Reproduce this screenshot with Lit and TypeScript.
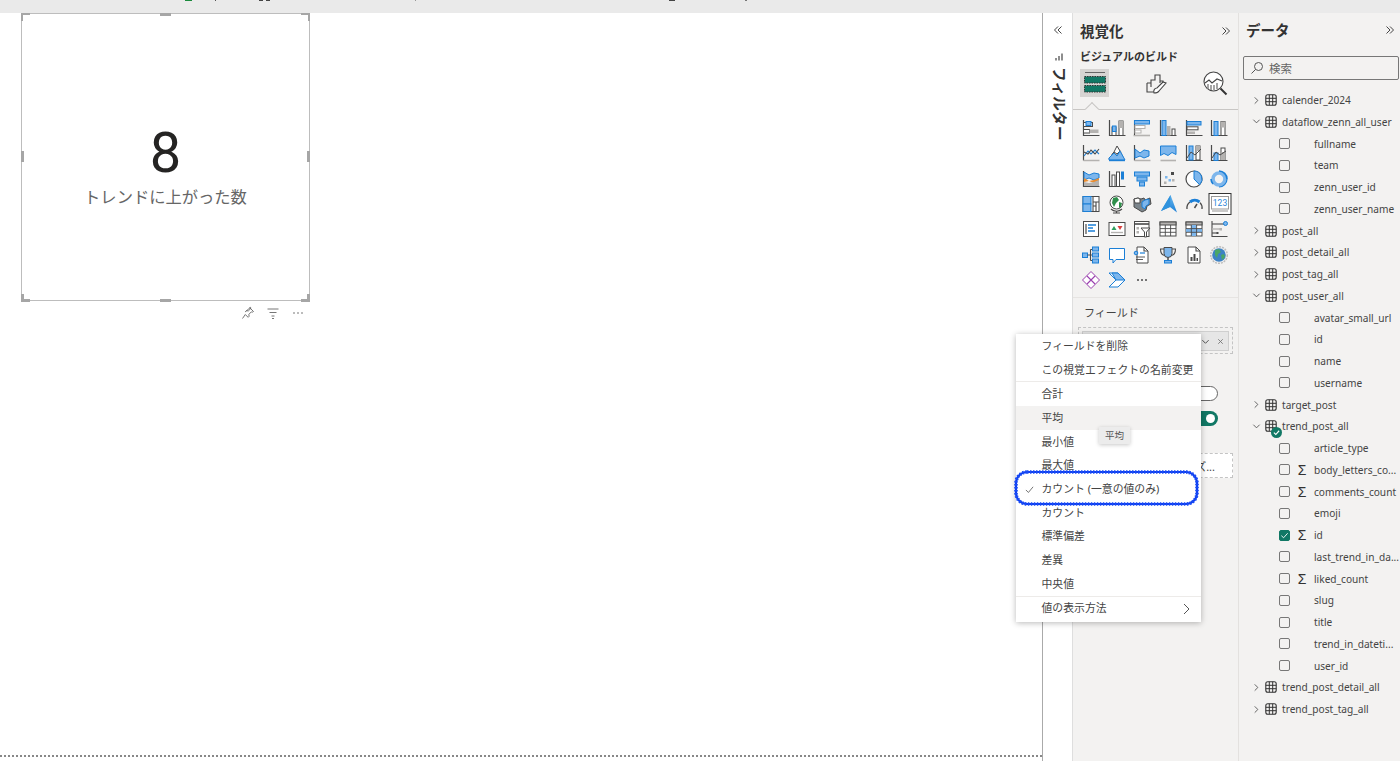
import { LitElement, html, css, svg } from "lit";
import { customElement } from "lit/decorators.js";

const D = "#4a4a4a";
const B = "#1b7fd6";
const L = "#7db6ec";
const G = "#b4b2b0";

const axes = svg`<path d="M2.5 2v15.5H18.5" fill="none" stroke="${D}" stroke-width="1.2"/>`;
const rect = (x: number, y: number, w: number, h: number, fill: string, stroke = "none") =>
  svg`<rect x="${x}" y="${y}" width="${w}" height="${h}" fill="${fill}" stroke="${stroke}"/>`;
const line = (d: string, stroke = D, w = 1.1) => svg`<path d="${d}" fill="none" stroke="${stroke}" stroke-width="${w}"/>`;
const area = (d: string, fill: string, stroke = "none") => svg`<path d="${d}" fill="${fill}" stroke="${stroke}" stroke-width="1"/>`;

const icons = [
  svg`${axes}${rect(2.5, 4.5, 9, 4, "#fff", D)}${rect(5, 3.5, 5, 4, L, B)}${rect(2.5, 11.5, 6, 3.5, "#fff", D)}${rect(8.5, 11.5, 9, 3.5, G)}`,
  svg`${axes}${rect(5, 9, 4, 8.5, "#fff", D)}${rect(5.5, 8, 3.5, 5.5, L, B)}${rect(12, 3, 4, 14.5, "#fff", D)}${rect(12, 3, 4, 7, G)}`,
  svg`${line("M1.5 17.5H18", G, 1.6)}${line("M2.5 2v15")}${rect(2.5, 2.5, 15, 3.5, L, B)}${rect(3, 7.5, 10, 3, "#fff", G)}${rect(3, 12, 6, 3, "#fff", G)}`,
  svg`${axes}${rect(4, 2.5, 4, 15, L, B)}${rect(9, 8, 3.5, 9.5, G)}${rect(14, 11, 3, 6.5, "#fff", D)}`,
  svg`${axes}${rect(3, 3.5, 14, 3.5, L, B)}${rect(3, 8.8, 11, 3, "#fff", D)}${rect(3, 13.5, 8, 2.5, G)}`,
  svg`${axes}${rect(5, 3.5, 4, 14, L, B)}${rect(12, 3.5, 4, 14, "#fff", D)}${rect(12, 3.5, 4, 6, G)}`,

  svg`${line("M2.5 2v15.5", D, 1.2)}${line("M2.5 17.5H18.5", G, 1.5)}${line("M3 13l4-5 3 3 4-4 4 4", B)}${line("M3 9l4 2 3-4 4 4 4-5", D)}`,
  svg`${area("M10 3l4 5 4 9H8z", G)}${area("M2 16l5-7 3-6 3 5-3 3-3-2z", "#fff", D)}${area("M2 17v-2l5-5 3 3 3-5 5 9z", L, B)}${line("M2 17.5H18", B, 1.4)}`,
  svg`${line("M2.5 2v15.5", D, 1.2)}${line("M2.5 17.5H18.5", G, 1.5)}${area("M3 6l5 4 4-3 5 1v5l-5 2-4-2-5 2z", L, B)}`,
  svg`${line("M2.5 17.5H18", G, 1.6)}${area("M2.5 3H18v8.5l-4-2-4 3-4-2-3.5 2z", L, B)}`,
  svg`${axes}${rect(5, 3, 4, 14, L, B)}${rect(12, 3, 4, 14, "#fff", D)}${rect(12, 3, 4, 5, G)}${line("M3 15l4-6 4 3 6-6", D, 1)}`,
  svg`${axes}${rect(5, 10, 4, 7.5, L, B)}${rect(12, 5, 4, 12, "#fff", D)}${rect(12, 9, 4, 8, G)}${line("M3 15l4-6 4 3 6-4", D, 1)}`,

  svg`${axes}${area("M3 3l5 3 5-2 5 1v4l-5 2-5-2-5 2z", L, B)}${area("M3 9l5 3 5-1 5-2v3l-5 2-5-2-5 1z", "#e98b2e")}${area("M3 13l5 1 5-1 5-2v6H3z", G)}`,
  svg`${axes}${rect(5, 6, 3, 11.5, "#fff", D)}${rect(9.5, 3, 3, 14.5, "#fff", D)}${rect(14, 2.5, 3, 8, B)}`,
  svg`${rect(2.5, 3, 15, 4, L, B)}${rect(5, 8, 10, 4, L, B)}${rect(7.5, 13, 5, 4, L, B)}`,
  svg`${line("M2.5 2v15.5H18.5")}${rect(13, 3, 3, 3, D)}${rect(7, 7, 2.5, 2.5, L)}${rect(10.5, 10, 2.5, 2.5, L)}${rect(14, 10, 2.5, 2.5, G)}${rect(6, 12.5, 2.5, 2.5, G)}`,
  svg`<circle cx="10" cy="10" r="8" fill="#fff" stroke="${D}" stroke-width="1.2"/>${area("M10 2a8 8 0 0 1 5.6 13.7L10 10z", L, B)}`,
  svg`<circle cx="10" cy="10" r="6" fill="none" stroke="${L}" stroke-width="3.6"/>${line("M10 2a8 8 0 0 1 8 8", B, 1.6)}${line("M4 15a8 8 0 0 1-2-5", B, 1.6)}${line("M10 18a8 8 0 0 0 8-8", B, 1.2)}`,

  svg`${rect(2, 2.5, 16, 15, "#fff", D)}${rect(2, 2.5, 8, 7.5, L, B)}${rect(2, 10, 8, 7.5, L, B)}${line("M12 2.5v15M12 8h6M15 8v9.5M12 12h3", D)}`,
  svg`<circle cx="9.5" cy="8.5" r="6.5" fill="#fff" stroke="${D}"/>${area("M6 4l4-1 2 3-3 3-2 4-2-4z", "#2f8f4b")}${area("M12 8l3 1-1 4-2 1z", "#2f8f4b")}${line("M4 15c3 3 8 3 11 0M9.5 17v1.500M6 19h7", D, 1.2)}`,
  svg`${area("M2 5l4-1 3 1 3-1 1 2 5-2 1 6-4 2-1 4-4 2-3-2-5-3z", "#7b858c", D)}${area("M10 8l3-2 4-1 0 5-3 2-1 3-3-2z", L, B)}${area("M2 5l4-1 2 1v4H3z", "#fff", D)}`,
  svg`<defs><linearGradient id="az" x1="0" y1="0" x2="0" y2="1"><stop offset="0" stop-color="#6cb9ee"/><stop offset="1" stop-color="#1b7fd6"/></linearGradient></defs>${area("M12.5 1L19 18.500 12 13 3 17z", "url(#az)")}${area("M12.5 1L12 13 3 17z", "#2f92dd")}`,
  svg`${line("M3 15a7.500 7.500 0 0 1 3-7", D, 1.3)}${line("M6 8a7.500 7.500 0 0 1 9.500 0", B, 3)}${line("M16 8.600a7.500 7.500 0 0 1 2 6.400", D, 1.3)}${line("M10.500 14l2.500-4", D, 1.5)}`,
  svg`${rect(0, -0.5, 22, 21, "#fff", "#333")}${rect(2.5, 2.5, 17, 12.5, "#fff", "#999")}${line("M3 17H19", G, 1.4)}<text x="11" y="12" text-anchor="middle" font-size="8.500" fill="#2b86d8" font-family="Roboto, sans-serif">123</text>`,

  svg`${rect(2.5, 2.5, 15, 15, "#fff", D)}${line("M5 5v10", D, 1.2)}${line("M7 6h8M7 9h5M7 12h7", B, 1.4)}`,
  svg`${rect(2, 3.5, 16, 13, "#fff", D)}${area("M4.500 11l2.500-4 2.500 4z", "#2f9e5d")}${area("M10.500 7h5L13 11z", "#d8403f")}${line("M4 13.500h12", G, 1.4)}`,
  svg`${rect(2.5, 2.5, 14.5, 15, "#fff", D)}${line("M2.500 5h14.500", D, 1.6)}${rect(4.5, 8, 2.5, 2.5, G)}${rect(4.5, 12, 2.5, 2.5, G)}${area("M9 9h9l-3.500 4v5h-2v-5z", "#fff", D)}`,
  svg`${rect(2, 3, 16, 14, "#fff", D)}${rect(2, 3, 16, 3, G, D)}${line("M7.300 6v11M12.600 6v11M2 9.600h16M2 13.300h16", D, 0.9)}`,
  svg`${rect(2, 3, 16, 14, "#fff", D)}${rect(2, 3, 16, 3, G, D)}${rect(7, 6, 5, 11, L)}${rect(2, 10, 16, 3, L)}${line("M7.300 6v11M12.600 6v11M2 9.600h16M2 13.300h16", D, 0.9)}`,
  svg`${line("M3 2v15.500H18.500", D)}${line("M3 5h12", D)}${line("M3 10h8", G, 1.4)}${line("M3 14h5", D)}<circle cx="16.500" cy="4.500" r="2" fill="${L}" stroke="${B}"/>${rect(10.5, 9, 2.5, 2.5, G)}${rect(7.5, 13, 2, 2, D)}`,

  svg`${rect(1.5, 8, 5, 4.5, L, B)}${line("M6.500 10h3M9.500 4.500v11M9.500 4.500h2M9.500 10h2M9.500 15.500h2", D)}${rect(11.5, 2, 6, 4, L, B)}${rect(11.5, 8, 6, 4, L, B)}${rect(11.5, 14, 6, 4, L, B)}`,
  svg`${area("M2.500 3.500h15v11H9l-3 3.500v-3.500H2.500z", "#fff", B)}`,
  svg`${area("M5 2h7l4 4v12H5z", "#fff", D)}${line("M12 2v4h4", D)}<circle cx="4" cy="8" r="1.800" fill="${L}" stroke="${B}"/>${line("M8 8h5", B, 1.2)}${line("M4 12h9M4 14.500h7", D, 0.9)}`,
  svg`${area("M6 2.500h8v6a4 4 0 0 1-8 0z", L, D)}${line("M6 4H2.500c0 4 1.500 6 4 6.500M14 4h3.500c0 4-1.500 6-4 6.500", D)}${line("M10 12.500v3", D, 1.5)}${rect(6.5, 15.5, 7, 2.5, L, B)}`,
  svg`${area("M4 2h8l4 4v12H4z", "#fff", D)}${line("M12 2v4h4", D)}${rect(6.5, 12, 2, 4, D)}${rect(9.5, 9, 2, 7, D)}${rect(12.5, 13, 1.5, 3, D)}`,
  svg`<circle cx="10" cy="10" r="8.300" fill="none" stroke="#bdbdbd" stroke-width="1.500" stroke-dasharray="2 1"/><circle cx="10" cy="10" r="6.800" fill="#3d82c4"/>${area("M6 5l4-1 2 3-3 2-1 4-2-3z", "#4aa765")}${area("M12 10l3-1 1 3-3 3z", "#4aa765")}`,

  svg`${area("M10 1.500L18.500 10 10 18.500 1.500 10z", "#fff", "#9a3fae")}${line("M6 6l8 8M14 6l-8 8", "#9a3fae")}`,
  svg`${area("M2 3h9l7 7-7 7H2l7-7z", "#fff", B)}${area("M11 3l7 7H9L5 3z", L, B)}`,
  svg`<g fill="${D}"><circle cx="6" cy="10" r="1"/><circle cx="10" cy="10" r="1"/><circle cx="14" cy="10" r="1"/></g>`,
];

type Field = { n: string; s?: boolean; c?: boolean };
type Table = { n: string; open?: boolean; badge?: boolean; fields?: Field[] };

const tables: Table[] = [
  { n: "calender_2024" },
  { n: "dataflow_zenn_all_user", open: true, fields: [{ n: "fullname" }, { n: "team" }, { n: "zenn_user_id" }, { n: "zenn_user_name" }] },
  { n: "post_all" },
  { n: "post_detail_all" },
  { n: "post_tag_all" },
  { n: "post_user_all", open: true, fields: [{ n: "avatar_small_url" }, { n: "id" }, { n: "name" }, { n: "username" }] },
  { n: "target_post" },
  {
    n: "trend_post_all", open: true, badge: true,
    fields: [
      { n: "article_type" }, { n: "body_letters_co...", s: true }, { n: "comments_count", s: true }, { n: "emoji" },
      { n: "id", s: true, c: true }, { n: "last_trend_in_da..." }, { n: "liked_count", s: true }, { n: "slug" },
      { n: "title" }, { n: "trend_in_dateti..." }, { n: "user_id" },
    ],
  },
  { n: "trend_post_detail_all" },
  { n: "trend_post_tag_all" },
];

const menuTop = ["フィールドを削除", "この視覚エフェクトの名前変更"];
const menuMid = ["合計", "平均", "最小値", "最大値", "カウント (一意の値のみ)", "カウント", "標準偏差", "差異", "中央値"];
const topMarks = [
  { x: 185, w: 7, c: "#1a8a3c" }, { x: 215, w: 1, c: "#555" }, { x: 259, w: 4, c: "#444" }, { x: 266, w: 4, c: "#444" },
  { x: 415, w: 1, c: "#999" }, { x: 669, w: 6, c: "#444" }, { x: 745, w: 2, c: "#777" },
];

const dbl = html`<svg class="dbl" viewBox="0 0 10 10"><path d="M1.500 1.500L5 5 1.500 8.500M5 1.500L8.500 5 5 8.500" fill="none" stroke="#444" stroke-width="1"/></svg>`;

@customElement("app-root")
export class AppRoot extends LitElement {
  static styles = css`
    :host { display: block; width: 1400px; height: 761px; overflow: hidden; position: relative; background: #fff;
      font-family: "Noto Sans", "Noto Sans CJK JP", sans-serif; color: #444; font-size: 11px; }
    * { box-sizing: border-box; }
    .top { height: 13px; background: #eaeaea; position: relative; }
    .mark { position: absolute; top: 0; height: 1px; }
    .main { display: flex; height: 748px; }
    .canvas { width: 1042px; flex: none; padding-left: 21px; height: 744px; border-bottom: 2px dotted #888; }
    .card { width: 289px; height: 288px; border: 1px solid #bdbdbd; position: relative; display: flex; flex-direction: column;
      align-items: center; padding-top: 112px; background: #fff; }
    .big { font: 400 56px/54px Roboto, sans-serif; color: #252423; }
    .lbl { font-size: 16.3px; line-height: 22px; margin-top: 6px; color: #666; white-space: nowrap; }
    .h { position: absolute; background: #a6a6a6; }
    .h.tm { left: 138px; top: -1px; width: 11px; height: 3px; }
    .h.bm { left: 138px; bottom: -2px; width: 11px; height: 3px; }
    .h.lm { left: -1px; top: 137px; width: 3px; height: 11px; }
    .h.rm { right: -1px; top: 137px; width: 3px; height: 11px; }
    .corner { position: absolute; width: 9px; height: 8px; border: 0 solid #a6a6a6; }
    .corner.tl { left: -1px; top: -1px; border-width: 2px 0 0 2px; }
    .corner.tr { right: -1px; top: -1px; border-width: 2px 2px 0 0; }
    .corner.bl { left: -1px; bottom: -2px; border-width: 0 0 3px 3px; }
    .corner.br { right: -1px; bottom: -2px; border-width: 0 3px 3px 0; }
    .vhead { width: 289px; display: flex; justify-content: flex-end; gap: 11px; padding: 5px 5px 0 0; }
    .vhead svg { width: 14px; height: 14px; }

    .filter { width: 31px; flex: none; border-left: 1px solid #aaa; border-right: 1px solid #dedede; display: flex;
      flex-direction: column; align-items: center; padding-top: 12px; background: #fff; margin-bottom: -4px; }
    .dbl { width: 10px; height: 10px; display: block; }
    .filter .bars { width: 10px; height: 10px; margin: 17px 0 0 3px; display: block; }
    .filter .vt { writing-mode: vertical-rl; text-orientation: sideways; font-size: 14.500px; font-weight: 700; color: #333; margin: 5px 0 0 4px;
      line-height: 16px; letter-spacing: 0.3px; }

    .viz { width: 166px; flex: none; background: #f3f2f1; padding-top: 8px; margin-bottom: -4px; border-right: 1px solid #e3e1df; }
    .phead { display: flex; align-items: center; justify-content: space-between; height: 20px; }
    .ptitle { font-size: 14.500px; font-weight: 700; color: #333; line-height: 20px; }
    .viz .phead { padding: 0 7px 0 7px; }
    .sub { font-weight: 700; font-size: 11px; line-height: 16px; margin: 8px 0 0 7px; color: #333; white-space: nowrap; }
    .build { display: flex; height: 28px; margin: 4px 0 0 7px; }
    .bt { width: 29px; height: 28px; display: flex; align-items: center; justify-content: center; }
    .bt.on { background: #d6d4d2; }
    .bt svg { width: 26px; height: 26px; }
    .bt.f { margin-left: 31px; }
    .bt.a { margin-left: 31px; }
    .sep { height: 1px; background: #c8c6c4; margin-top: 12px; position: relative; }
    .caret { position: absolute; left: 14px; top: -5px; width: 10px; height: 10px; background: #f3f2f1; border: 1px solid #c8c6c4;
      border-right: 0; border-bottom: 0; transform: rotate(45deg); }
    .gallery { display: grid; grid-template-columns: repeat(6, 25.7px); grid-auto-rows: 25.3px; padding-left: 5px; margin-top: 5.500px; }
    .cell { display: flex; align-items: center; justify-content: center; }
    .cell svg { width: 20px; height: 20px; display: block; overflow: visible; }
    .sep2 { height: 1px; background: #e6e4e2; margin-top: 4.500px; }
    .flabel { line-height: 16px; margin: 6.500px 0 0 11px; color: #444; white-space: nowrap; }
    .well { margin: 6.500px 5px 0 5px; height: 27px; border: 1px dashed #c4c4c4; padding: 3px; }
    .chip { height: 20px; background: #e6e6e6; border: 1px solid #cfcfcf; display: flex; align-items: center; justify-content: flex-end; gap: 6px; padding-right: 3px; }
    .chip svg { width: 9px; height: 9px; }
    .tog { width: 30px; height: 15px; border-radius: 8px; margin: 0 20px 0 auto; display: flex; align-items: center; padding: 0 3px; }
    .tog.off { margin-top: 32px; background: #fff; border: 1px solid #666; }
    .tog.on { margin-top: 10px; background: #117865; justify-content: flex-end; }
    .tog.on i { width: 9px; height: 9px; border-radius: 50%; background: #fff; }
    .well2 { margin: 27px 5px 0 5px; height: 25px; border: 1px dashed #c4c4c4; background: #fff; display: flex; align-items: center;
      justify-content: flex-end; padding-right: 17px; white-space: nowrap; }

    .data { flex: 1; background: #f3f2f1; padding-top: 7px; margin-bottom: -4px; min-width: 0; }
    .data .phead { padding: 0 5px 0 7px; }
    .search { margin: 16px 1px 0 4px; height: 24px; border: 1px solid #777; border-radius: 2px; display: flex; align-items: center; padding-left: 6px; gap: 5px; color: #666; font-size: 11.500px; }
    .search svg { width: 14px; height: 14px; }
    .tree { margin-top: 9.300px; }
    .row { height: 21.75px; display: flex; align-items: center; white-space: nowrap; font-size: 10.150px; color: #444; }
    .row.t { padding-left: 13px; }
    .row.t .chev { width: 9px; height: 9px; margin-right: 4px; flex: none; }
    .tbl { position: relative; width: 12px; height: 12px; margin-right: 5px; flex: none; }
    .tbl svg { width: 12px; height: 12px; display: block; }
    .badge { position: absolute; left: 6px; top: 7px; width: 11px; height: 11px; border-radius: 50%; background: #117865; display: flex; align-items: center; justify-content: center; }
    .badge svg { width: 7px; height: 7px; }
    .row.f { padding-left: 40px; }
    .cb { width: 11px; height: 11px; border: 1px solid #777; border-radius: 2px; flex: none; display: flex; align-items: center; justify-content: center; }
    .cb.on { background: #117865; border-color: #117865; }
    .cb svg { width: 9px; height: 9px; }
    .sig { width: 24px; flex: none; text-align: center; font: 14px/14px "Liberation Sans", sans-serif; color: #333; }

    .menu { position: absolute; left: 1016px; top: 334px; width: 185px; background: #fff; padding-bottom: 2px;
      box-shadow: 0 1px 6px rgba(0,0,0,.28); }
    .mi { height: 23.7px; display: flex; align-items: center; padding: 0 0 2px 25.500px; color: #444; white-space: nowrap; font-size: 10.850px; position: relative; }
    .mi.hv { background: #f3f2f1; }
    .mi .ck { position: absolute; left: 9px; top: 8px; width: 9px; height: 9px; }
    .mi .ar { position: absolute; right: 9px; top: 6px; width: 11px; height: 12px; }
    .msep { height: 1px; background: #edebe9; }
    .tip { position: absolute; left: 1099px; top: 427px; width: 31px; height: 17px; background: #ececec; font-size: 9.500px; text-align: center;
      line-height: 17px; color: #555; box-shadow: 0 1px 4px rgba(0,0,0,.22); }
    .hl { position: absolute; left: 1013px; top: 469px; width: 187px; height: 38px; }
  `;

  render() {
    return html`
      <div class="top">${topMarks.map((m) => html`<span class="mark" style="left:${m.x}px;width:${m.w}px;background:${m.c}"></span>`)}</div>
      <div class="main">
        <div class="canvas">
          <div class="card">
            <div class="corner tl"></div><div class="corner tr"></div><div class="corner bl"></div><div class="corner br"></div>
            <div class="h tm"></div><div class="h bm"></div><div class="h lm"></div><div class="h rm"></div>
            <div class="big">8</div>
            <div class="lbl">トレンドに上がった数</div>
          </div>
          <div class="vhead">
            <svg viewBox="0 0 14 14"><path d="M8.500 1.500l4 4-1 .6-1.200-.2-2.400 2.400.2 2-1 1-2.800-2.800L1.500 12.500M4.400 5.700l1-1 2 .2 2.400-2.400-.2-1.200z" fill="none" stroke="#666" stroke-width=".9"/></svg>
            <svg viewBox="0 0 14 14"><path d="M1.500 3h11M3.500 6.500h7M5.500 10h3M6 12.500h2" fill="none" stroke="#666" stroke-width=".9"/></svg>
            <svg viewBox="0 0 14 14"><g fill="#666"><circle cx="3" cy="7" r=".8"/><circle cx="7" cy="7" r=".8"/><circle cx="11" cy="7" r=".8"/></g></svg>
          </div>
        </div>

        <div class="filter">
          <svg class="dbl" viewBox="0 0 10 10"><path d="M5 1.500L1.500 5 5 8.500M8.500 1.500L5 5l3.500 3.500" fill="none" stroke="#444" stroke-width="1"/></svg>
          <svg class="bars" viewBox="0 0 10 10"><path d="M2 6v2.500M5 4v4.500M8 1.500v7" fill="none" stroke="#444" stroke-width="1.200"/></svg>
          <div class="vt">フィルター</div>
        </div>

        <div class="viz">
          <div class="phead"><span class="ptitle">視覚化</span>${dbl}</div>
          <div class="sub">ビジュアルのビルド</div>
          <div class="build">
            <div class="bt on"><svg viewBox="0 0 26 26">
              <path d="M3 2.500h20" stroke="#666" stroke-width="1"/>
              <rect x="2.500" y="6.500" width="21" height="6.500" fill="#117865" stroke="#333" stroke-dasharray="1.500 1"/>
              <rect x="2.500" y="15.500" width="21" height="6.500" fill="#117865" stroke="#333" stroke-dasharray="1.500 1"/>
            </svg></div>
            <div class="bt f"><svg viewBox="0 0 26 26"><path d="M5 13v9h9M5 13h4M9 17V10h4V5h5v8M18 11h3v3" fill="none" stroke="#444" stroke-width="1.100"/><path d="M12 23c-1-3 1-5 3-5l6-6 3 1-7 8c-1 2-3 2-5 2z" fill="#fff" stroke="#444" stroke-width="1.100"/></svg></div>
            <div class="bt a"><svg viewBox="0 0 26 26"><circle cx="11.500" cy="11.500" r="9.500" fill="#fff" stroke="#444" stroke-width="1.100"/><path d="M18.500 18.500l6 6" stroke="#333" stroke-width="2"/><path d="M3 13l4-3 3 3 5-4 5 2" fill="none" stroke="#444" stroke-width="1.100"/><path d="M6 14v5M9 15v5M12 15v5M15 13v6" stroke="#888" stroke-width="1.500"/></svg></div>
          </div>
          <div class="sep"><div class="caret"></div></div>
          <div class="gallery">${icons.map((i) => html`<div class="cell"><svg viewBox="0 0 20 20">${i}</svg></div>`)}</div>
          <div class="sep2"></div>
          <div class="flabel">フィールド</div>
          <div class="well"><div class="chip">
            <svg viewBox="0 0 10 10"><path d="M1.500 3.500L5 7l3.500-3.500" fill="none" stroke="#444" stroke-width="1"/></svg>
            <svg viewBox="0 0 10 10"><path d="M2.500 2.500l5 5M7.500 2.500l-5 5" fill="none" stroke="#777" stroke-width="1"/></svg>
          </div></div>
          <div class="tog off"></div>
          <div class="tog on"><i></i></div>
          <div class="well2">ズ...</div>
        </div>

        <div class="data">
          <div class="phead"><span class="ptitle">データ</span>${dbl}</div>
          <div class="search">
            <svg viewBox="0 0 14 14"><circle cx="8.500" cy="5.500" r="4" fill="none" stroke="#555"/><path d="M5.500 8.500L1.500 12.500" stroke="#555"/></svg>
            <span>検索</span>
          </div>
          <div class="tree">${tables.map((t) => this.renderTable(t))}</div>
        </div>
      </div>

      <div class="menu">
        ${menuTop.map((m) => html`<div class="mi">${m}</div>`)}
        <div class="msep"></div>
        ${menuMid.map((m, i) => html`<div class="mi ${i === 1 ? "hv" : ""}">
          ${i === 4 ? html`<svg class="ck" viewBox="0 0 10 10"><path d="M1 5.500L3.800 8.300 9 2" fill="none" stroke="#555" stroke-width=".9"/></svg>` : ""}${m}</div>`)}
        <div class="msep"></div>
        <div class="mi">値の表示方法
          <svg class="ar" viewBox="0 0 11 12"><path d="M3 1l5 5-5 5" fill="none" stroke="#555" stroke-width="1"/></svg>
        </div>
      </div>
      <div class="tip">平均</div>
      <svg class="hl" viewBox="0 0 187 38">
        <rect x="3" y="3" width="181" height="32" rx="11" fill="none" stroke="#0d3df0" stroke-width="2.200"/>
        <rect x="3" y="3" width="181" height="32" rx="11" fill="none" stroke="#1a4cf5" stroke-width="3.600" stroke-dasharray="1.500 1.500"/>
      </svg>
    `;
  }

  renderTable(t: Table) {
    return html`
      <div class="row t">
        <svg class="chev" viewBox="0 0 10 10"><path d="${t.open ? "M1.500 3L5 6.500 8.500 3" : "M3 1.500L6.500 5 3 8.500"}" fill="none" stroke="#555" stroke-width="1"/></svg>
        <span class="tbl">
          <svg viewBox="0 0 12 12"><rect x=".8" y=".8" width="10.400" height="10.400" rx="2" fill="none" stroke="#333" stroke-width="1.100"/><path d="M4.300 .8v10.400M7.700 .8v10.400M.8 4.300h10.400M.8 7.700h10.400" stroke="#333" stroke-width="1"/></svg>
          ${t.badge ? html`<span class="badge"><svg viewBox="0 0 8 8"><path d="M1 4.200L3.200 6.300 7 2" fill="none" stroke="#fff" stroke-width="1.300"/></svg></span>` : ""}
        </span>
        <span>${t.n}</span>
      </div>
      ${(t.fields ?? []).map((f) => html`
        <div class="row f">
          <span class="cb ${f.c ? "on" : ""}">${f.c ? html`<svg viewBox="0 0 10 10"><path d="M1.500 5.200L4 7.500 8.500 2.500" fill="none" stroke="#fff" stroke-width="1"/></svg>` : ""}</span>
          <span class="sig">${f.s ? "Σ" : ""}</span>
          <span>${f.n}</span>
        </div>`)}
    `;
  }
}
